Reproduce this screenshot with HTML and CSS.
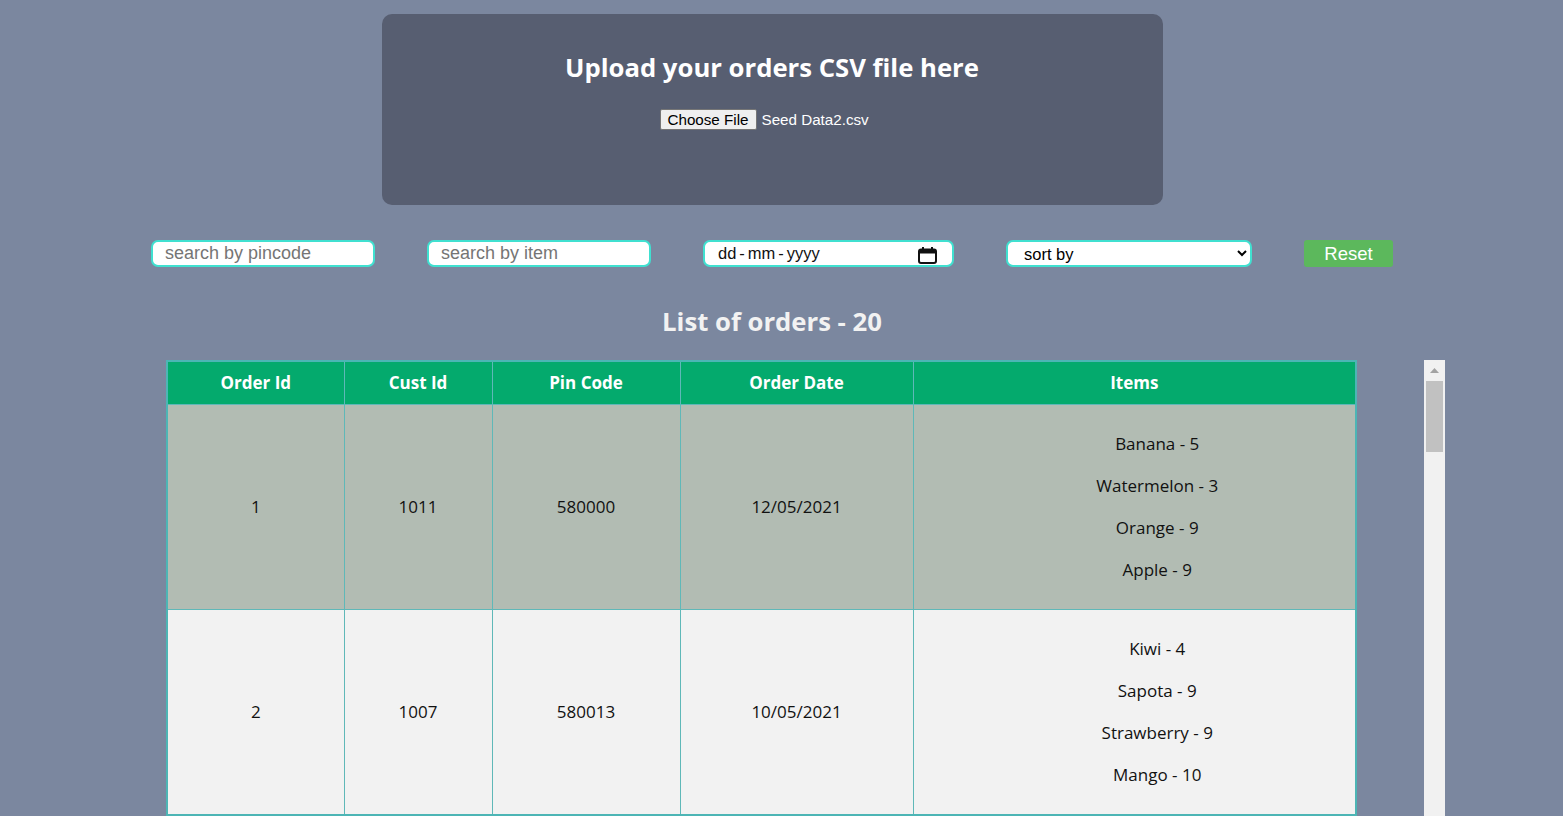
FILE: index.html
```html
<!DOCTYPE html>
<html lang="en">
<head>
<meta charset="utf-8">
<title>Orders</title>
<link rel="stylesheet" href="styles.css">
</head>
<body>
<div class="page">
  <section class="upload">
    <h2 class="upload-title">Upload your orders CSV file here</h2>
    <div class="file-row">
      <label class="file-btn" for="csv">Choose File</label>
      <input class="file-hidden" id="csv" type="file" accept=".csv">
      <span class="file-name">Seed Data2.csv</span>
    </div>
  </section>

  <div class="filters">
    <input class="field f-pin" type="text" placeholder="search by pincode">
    <input class="field f-item" type="text" placeholder="search by item">
    <div class="field f-date">
      <span class="date-text">dd<span class="sep">-</span>mm<span class="sep">-</span>yyyy</span>
      <svg class="cal" width="19" height="17" viewBox="0 0 19 17" aria-hidden="true">
        <rect x="1" y="2.5" width="17" height="13.5" rx="2" ry="2" fill="none" stroke="#111" stroke-width="2"/>
        <rect x="1" y="2.5" width="17" height="4" fill="#111"/>
        <rect x="4" y="0" width="2" height="4" fill="#111"/>
        <rect x="13" y="0" width="2" height="4" fill="#111"/>
      </svg>
    </div>
    <select class="field f-sort">
      <option>sort by</option>
      <option>Order Date</option>
      <option>Order Id</option>
    </select>
    <button class="reset" type="button">Reset</button>
  </div>

  <h2 class="list-title">List of orders - 20</h2>

  <div class="table-area">
    <div class="table-wrap">
      <table class="orders">
        <colgroup>
          <col class="c1"><col class="c2"><col class="c3"><col class="c4"><col class="c5">
        </colgroup>
        <thead>
          <tr><th>Order Id</th><th>Cust Id</th><th>Pin Code</th><th>Order Date</th><th>Items</th></tr>
        </thead>
        <tbody>
          <tr><td>1</td><td>1011</td><td>580000</td><td>12/05/2021</td><td><ul class="items"><li>Banana - 5</li><li>Watermelon - 3</li><li>Orange - 9</li><li>Apple - 9</li></ul></td></tr>
          <tr><td>2</td><td>1007</td><td>580013</td><td>10/05/2021</td><td><ul class="items"><li>Kiwi - 4</li><li>Sapota - 9</li><li>Strawberry - 9</li><li>Mango - 10</li></ul></td></tr>
        </tbody>
      </table>
    </div>
    <div class="vscroll" aria-hidden="true">
      <div class="vscroll-btn">
        <svg width="9" height="5" viewBox="0 0 9 5"><polygon points="4.5,0 9,5 0,5" fill="#a3a3a3"/></svg>
      </div>
      <div class="vscroll-thumb"></div>
    </div>
  </div>
</div>
</body>
</html>
```

FILE: styles.css
```css
html, body {
  margin: 0;
  padding: 0;
  overflow: hidden;
  background: #7b879f;
}

body {
  font-family: "Open Sans", "Noto Sans", sans-serif;
}

.page {
  width: 1544px;
  height: 816px;
  display: flex;
  flex-direction: column;
}

/* Upload card */
.upload {
  width: 781px;
  height: 191px;
  margin: 14px auto 0;
  box-sizing: border-box;
  background: #575e71;
  border-radius: 10px;
  padding-top: 36px;
  text-align: center;
  flex-shrink: 0;
}

.upload-title {
  margin: 0;
  font-size: 25.7px;
  line-height: 36px;
  font-weight: 700;
  color: #ffffff;
}

.file-row {
  width: 225px;
  margin: 23px auto 0;
  display: flex;
  justify-content: flex-start;
  align-items: center;
  gap: 5px;
  height: 21px;
}

.file-btn {
  box-sizing: border-box;
  height: 21px;
  width: 97px;
  flex-shrink: 0;
  display: flex;
  align-items: center;
  justify-content: center;
  background: #efefef;
  border: 1px solid #767676;
  border-radius: 2px;
  font-family: "Liberation Sans", Arial, sans-serif;
  font-size: 15.2px;
  color: #000;
}

.file-hidden {
  display: none;
}

.file-name {
  font-family: "Liberation Sans", Arial, sans-serif;
  font-size: 15.2px;
  color: #ffffff;
  white-space: nowrap;
}

/* Filters */
.filters {
  margin-top: 35px;
  display: flex;
  justify-content: center;
  gap: 52px;
  height: 27px;
  flex-shrink: 0;
}

.field {
  box-sizing: border-box;
  height: 27px;
  border: 2px solid #40e0d0;
  border-radius: 7px;
  background: #ffffff;
  font-family: "Liberation Sans", Arial, sans-serif;
  font-size: 18px;
  color: #000;
  outline: none;
  margin: 0;
}

.field::placeholder {
  color: #757575;
}

.f-pin, .f-item {
  width: 224px;
  padding: 0 12px;
}

.f-date {
  width: 251px;
  padding: 0 15px 0 13px;
  display: flex;
  align-items: center;
  justify-content: space-between;
}

.date-text {
  font-size: 16.5px;
  color: #111;
}

.sep {
  margin: 0 3px;
}

.cal {
  display: block;
  margin-top: 3px;
}

.f-sort {
  width: 246px;
  padding: 0 10px 0 12px;
  font-size: 16.5px;
}

.reset {
  width: 89px;
  height: 27px;
  border: none;
  border-radius: 3px;
  background: #5cb85c;
  color: #ffffff;
  font-family: "Liberation Sans", Arial, sans-serif;
  font-size: 18.5px;
  padding: 0;
  cursor: pointer;
}

/* List heading */
.list-title {
  margin: 37px 0 0;
  text-align: center;
  font-size: 25.7px;
  line-height: 36px;
  font-weight: 700;
  color: #f2f2f2;
  flex-shrink: 0;
}

/* Table area with its own scrollbar */
.table-area {
  margin: 20px 0 0 99px;
  width: 1346px;
  flex: 1;
  min-height: 0;
  display: flex;
  overflow: hidden;
}

.table-wrap {
  flex: 1;
  min-width: 0;
}

.vscroll {
  width: 21px;
  flex-shrink: 0;
  background: #f1f1f1;
  display: flex;
  flex-direction: column;
  align-items: center;
}

.vscroll-btn {
  width: 21px;
  height: 21px;
  display: flex;
  align-items: center;
  justify-content: center;
}

.vscroll-btn svg {
  display: block;
  margin-top: -1px;
}

.vscroll-thumb {
  width: 17px;
  height: 71px;
  background: #c1c1c1;
}

.orders {
  width: 1189px;
  margin: 0 auto;
  border-collapse: collapse;
  table-layout: fixed;
  border: 2px solid #4db5b5;
}

.c1 { width: 177px; }
.c2 { width: 148px; }
.c3 { width: 188px; }
.c4 { width: 233px; }
.c5 { width: 443px; }

.orders th,
.orders td {
  border: 1px solid #5fb8b8;
  text-align: center;
  vertical-align: middle;
}

.orders th {
  height: 43px;
  box-sizing: border-box;
  padding: 0 8px;
  background: #04aa6d;
  color: #ffffff;
  font-size: 17px;
  font-weight: 700;
}

.orders td {
  height: 205px;
  box-sizing: border-box;
  padding: 18px 8px;
  font-size: 17px;
  color: #111111;
}

.orders tbody tr:nth-child(odd) td {
  background: #b2bcb3;
}

.orders tbody tr:nth-child(even) td {
  background: #f2f2f2;
}

.items {
  list-style: none;
  margin: 0;
  padding: 0 0 0 46px;
}

.items li {
  height: 42px;
  line-height: 42px;
}
```
